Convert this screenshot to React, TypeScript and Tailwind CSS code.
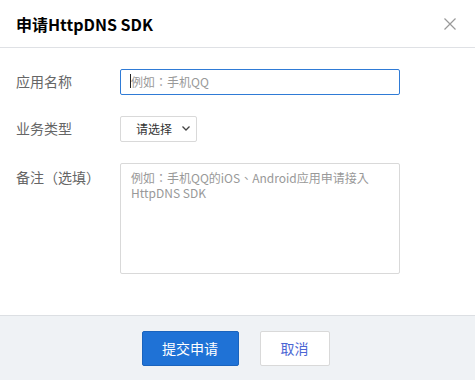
import { useState } from 'react'

const font = { fontFamily: '"Noto Sans CJK SC", "Noto Sans", sans-serif' }
// centred full-width punctuation, as in the reference
const punct = { fontFamily: '"Noto Sans CJK TC", "Noto Sans", sans-serif' }

export default function App() {
  const [name, setName] = useState('')
  const [note, setNote] = useState('')

  return (
    <div className="w-[475px] h-[380px] bg-white flex flex-col text-[#333]" style={font}>
      {/* header */}
      <div className="h-[48px] shrink-0 flex items-center justify-between pl-4 pr-[19px] border-b border-[#dfe1e5]">
        <h2 className="text-[16px] font-bold text-[#000]">申请HttpDNS SDK</h2>
        <button className="w-[12px] h-[12px] text-[#999]" aria-label="关闭">
          <svg viewBox="0 0 12 12" width="12" height="12" fill="none" stroke="currentColor" strokeWidth="1.2">
            <path d="M0.5 0.5 L11.5 11.5 M11.5 0.5 L0.5 11.5" />
          </svg>
        </button>
      </div>

      {/* body */}
      <div className="flex-1 flex flex-col gap-[21px] pt-[20px] pl-4 pr-[75px]">
        <div className="flex items-center">
          <label className="w-[104px] text-[14px] text-[#666]">应用名称</label>
          <div className="relative flex-1">
            <input
              value={name}
              onChange={(e) => setName(e.target.value)}
              placeholder="例如：手机QQ"
              style={punct}
              className="w-full h-[26px] px-[10px] rounded-[2px] border border-[#2f7bd6] text-[12px] outline-none placeholder:text-[#999]"
            />
            <span className="absolute left-[10px] top-[6px] w-px h-[14px] bg-[#222]" />
          </div>
        </div>

        <div className="flex items-center">
          <label className="w-[104px] text-[14px] text-[#666]">业务类型</label>
          <button className="h-[26px] w-[77px] flex items-center gap-[10px] pl-[15px] rounded-[2px] border border-[#d9d9d9] bg-white text-[12px] text-[#333]">
            请选择
            <svg viewBox="0 0 8 5" width="8" height="5" fill="none" stroke="#444" strokeWidth="1.3">
              <path d="M0.5 0.5 L4 4 L7.5 0.5" />
            </svg>
          </button>
        </div>

        <div className="flex items-start">
          <label className="w-[104px] text-[14px] text-[#666] pt-[4px]">
            备注<span style={punct}>（</span>选填<span style={punct}>）</span>
          </label>
          <textarea
            value={note}
            onChange={(e) => setNote(e.target.value)}
            placeholder="例如：手机QQ的iOS、Android应用申请接入HttpDNS SDK"
            style={punct}
            className="flex-1 h-[111px] resize-none px-[10px] py-[6px] rounded-[2px] border border-[#d9d9d9] text-[12px] leading-[15px] outline-none placeholder:text-[#999]"
          />
        </div>
      </div>

      {/* footer */}
      <div className="h-[65px] shrink-0 bg-[#eff2f5] border-t border-[#dcdfe3] flex justify-center gap-[21px] pt-[15px] pr-[4px]">
        <button className="h-[35px] w-[97px] rounded-[2px] bg-[#1f72d6] border border-[#1a63bd] text-white text-[14px]">
          提交申请
        </button>
        <button className="h-[35px] w-[70px] rounded-[2px] bg-white border border-[#d9d9d9] text-[#4b66d4] text-[14px]">
          取消
        </button>
      </div>
    </div>
  )
}
